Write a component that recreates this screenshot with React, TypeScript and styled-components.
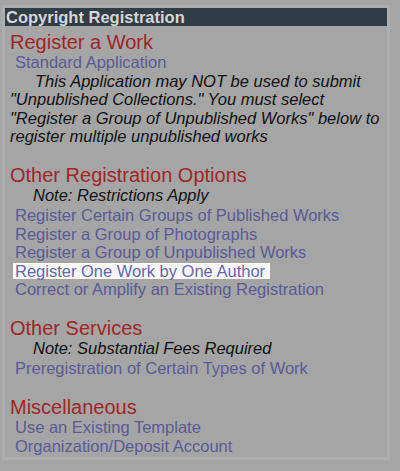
import React from "react";
import styled, { createGlobalStyle } from "styled-components";

const GlobalStyle = createGlobalStyle`
  html, body {
    margin: 0;
    padding: 0;
    background: #a5a5a5;
    font-family: "Liberation Sans", Arial, sans-serif;
  }
`;

const Panel = styled.div`
  width: 388px;
  margin: 5px 0 0 2px;
  border: 3px solid #adadad;
  box-sizing: border-box;
  padding-bottom: 1.5px;
`;

const Header = styled.div`
  background: #2f3d47;
  color: #d6d6d6;
  font-weight: bold;
  font-size: 16.5px;
  line-height: 18px;
  padding-left: 1px;
`;

const Body = styled.div`
  padding: 5px 0 0 5px;
`;

const Section = styled.div`
  margin-bottom: 18.5px;
  &:last-child {
    margin-bottom: 0;
  }
`;

const Title = styled.div`
  color: #a12525;
  font-size: 20px;
  line-height: 22px;
`;

const LinkRow = styled.a<{ $active?: boolean }>`
  display: block;
  color: #5a5a98;
  font-size: 16.5px;
  line-height: 18.5px;
  padding-left: ${(p) => (p.$active ? "3px" : "5px")};
  text-decoration: none;
`;

const Highlight = styled.span`
  display: inline-block;
  height: 16px;
  line-height: 16px;
  padding: 0 5px 0 2px;
  background: #f9f9f9;
  color: #6464ae;
`;

const Note = styled.div<{ $wrap?: boolean }>`
  font-style: italic;
  color: #111;
  font-size: 16.5px;
  line-height: 18.5px;
  padding-left: ${(p) => (p.$wrap ? "0" : "23px")};
  text-indent: ${(p) => (p.$wrap ? "25px" : "0")};
  margin-bottom: ${(p) => (p.$wrap ? "0" : "1.5px")};
`;

type Item = { label: string; active?: boolean };

const groups: { title: string; note?: string; items: Item[] }[] = [
  {
    title: "Other Registration Options",
    note: "Note: Restrictions Apply",
    items: [
      { label: "Register Certain Groups of Published Works" },
      { label: "Register a Group of Photographs" },
      { label: "Register a Group of Unpublished Works" },
      { label: "Register One Work by One Author", active: true },
      { label: "Correct or Amplify an Existing Registration" },
    ],
  },
  {
    title: "Other Services",
    note: "Note: Substantial Fees Required",
    items: [{ label: "Preregistration of Certain Types of Work" }],
  },
  {
    title: "Miscellaneous",
    items: [
      { label: "Use an Existing Template" },
      { label: "Organization/Deposit Account" },
    ],
  },
];

export default function App() {
  return (
    <>
      <GlobalStyle />
      <Panel>
        <Header>Copyright Registration</Header>
        <Body>
          <Section>
            <Title>Register a Work</Title>
            <LinkRow href="#">Standard Application</LinkRow>
            <Note $wrap>
              This Application may NOT be used to submit "Unpublished
              Collections." You must select "Register a Group of Unpublished
              Works" below to register multiple unpublished works
            </Note>
          </Section>
          {groups.map((g) => (
            <Section key={g.title}>
              <Title>{g.title}</Title>
              {g.note && <Note>{g.note}</Note>}
              {g.items.map((it) => (
                <LinkRow key={it.label} href="#" $active={it.active}>
                  {it.active ? <Highlight>{it.label}</Highlight> : it.label}
                </LinkRow>
              ))}
            </Section>
          ))}
        </Body>
      </Panel>
    </>
  );
}
